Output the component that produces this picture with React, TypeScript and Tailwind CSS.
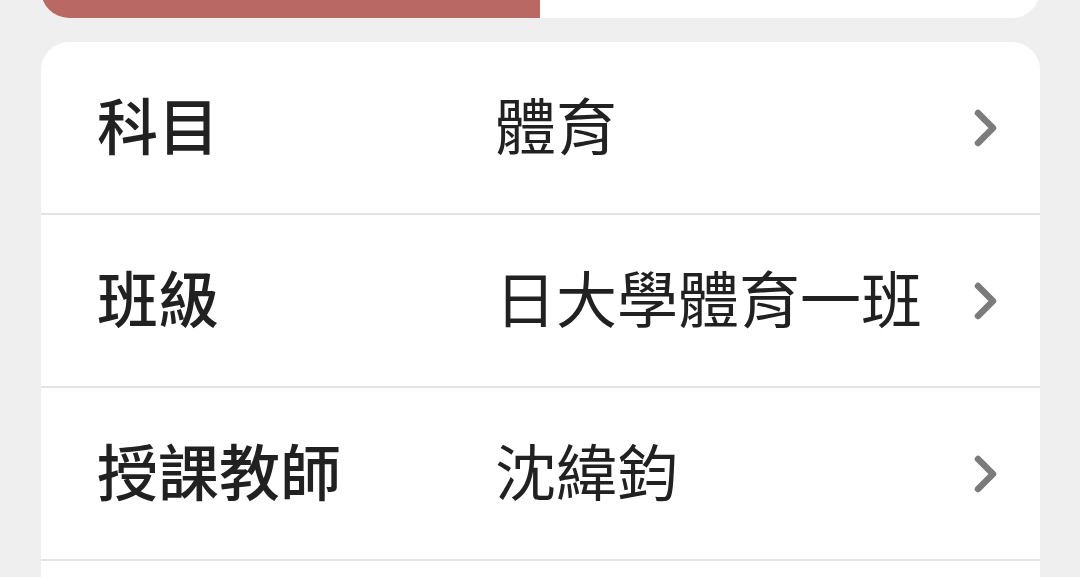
import React from 'react';

const rows = [
  { label: '科目', value: '體育' },
  { label: '班級', value: '日大學體育一班' },
  { label: '授課教師', value: '沈緯鈞' },
  { label: '', value: '' },
];

function Chevron() {
  return (
    <svg width="28" height="42" viewBox="0 0 28 42" fill="none">
      <path d="M6 6 L21 21 L6 36" stroke="#7b7b7b" strokeWidth="6.5" strokeLinecap="round" strokeLinejoin="round" />
    </svg>
  );
}

export default function App() {
  return (
    <div
      className="min-h-[577px] h-[577px] overflow-hidden bg-[#efefef] pl-[41px] pr-[40px]"
      style={{ fontFamily: '"Noto Sans CJK TC", "Noto Sans", sans-serif' }}
    >
      {/* progress card */}
      <div className="-mt-[42px] h-[60px] overflow-hidden rounded-b-[28px] bg-white">
        <div className="h-full w-[499px] bg-[#b96864]" />
      </div>

      <div className="mt-[24px] overflow-hidden rounded-t-[28px] bg-white">
        {rows.map((row, i) => (
          <div
            key={i}
            className="flex h-[173px] items-center border-b-2 border-[#e3e3e3] pl-[56px] pr-[40px]"
          >
            <div className="w-[398px] pb-[8px] text-[61px] font-medium leading-none text-[#212121]">{row.label}</div>
            <div className="flex-1 pb-[8px] text-[61px] font-normal leading-none text-[#212121]">{row.value}</div>
            {row.label && <Chevron />}
          </div>
        ))}
      </div>
    </div>
  );
}
